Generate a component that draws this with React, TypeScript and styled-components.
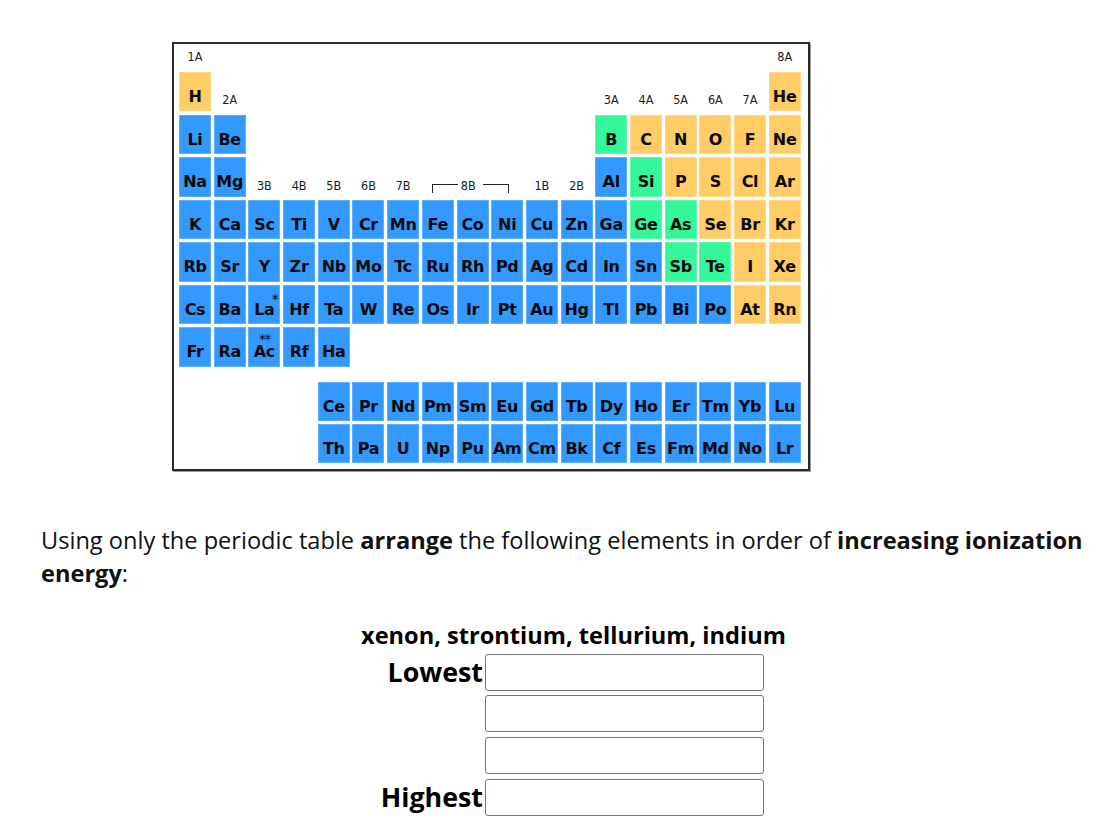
import React from "react";
import styled, { createGlobalStyle } from "styled-components";

const Global = createGlobalStyle`
  html, body { margin: 0; padding: 0; background: #fff; }
  body { font-family: "Open Sans", "Noto Sans", sans-serif; color: #000; }
`;

const YELLOW = new Set(["H","He","C","N","O","F","Ne","P","S","Cl","Ar","Se","Br","Kr","I","Xe","At","Rn"]);
const GREEN = new Set(["B","Si","Ge","As","Sb","Te"]);

type Kind = "metal" | "nonmetal" | "metalloid";
const kindOf = (s: string): Kind => (YELLOW.has(s) ? "nonmetal" : GREEN.has(s) ? "metalloid" : "metal");
const FILL: Record<Kind, string> = { metal: "#3399ff", nonmetal: "#ffcc66", metalloid: "#33f799" };

type El = { s: string; c: number; r: number; mark?: "one" | "two" };

const seq = (syms: string[], row: number, start: number): El[] => syms.map((s, i) => ({ s, c: start + i, r: row }));

const ELEMENTS: El[] = [
  { s: "H", c: 1, r: 2 }, { s: "He", c: 18, r: 2 },
  ...seq(["Li", "Be"], 3, 1), ...seq(["B", "C", "N", "O", "F", "Ne"], 3, 13),
  ...seq(["Na", "Mg"], 4, 1), ...seq(["Al", "Si", "P", "S", "Cl", "Ar"], 4, 13),
  ...seq(["K","Ca","Sc","Ti","V","Cr","Mn","Fe","Co","Ni","Cu","Zn","Ga","Ge","As","Se","Br","Kr"], 5, 1),
  ...seq(["Rb","Sr","Y","Zr","Nb","Mo","Tc","Ru","Rh","Pd","Ag","Cd","In","Sn","Sb","Te","I","Xe"], 6, 1),
  ...seq(["Cs","Ba","La","Hf","Ta","W","Re","Os","Ir","Pt","Au","Hg","Tl","Pb","Bi","Po","At","Rn"], 7, 1),
  ...seq(["Fr","Ra","Ac","Rf","Ha"], 8, 1),
  ...seq(["Ce","Pr","Nd","Pm","Sm","Eu","Gd","Tb","Dy","Ho","Er","Tm","Yb","Lu"], 10, 5),
  ...seq(["Th","Pa","U","Np","Pu","Am","Cm","Bk","Cf","Es","Fm","Md","No","Lr"], 11, 5),
].map((e) => (e.s === "La" ? { ...e, mark: "one" as const } : e.s === "Ac" ? { ...e, mark: "two" as const } : e));

const GROUPS: { t: string; c: number; r: number }[] = [
  { t: "1A", c: 1, r: 1 }, { t: "8A", c: 18, r: 1 },
  { t: "2A", c: 2, r: 2 },
  { t: "3A", c: 13, r: 2 }, { t: "4A", c: 14, r: 2 }, { t: "5A", c: 15, r: 2 }, { t: "6A", c: 16, r: 2 }, { t: "7A", c: 17, r: 2 },
  { t: "3B", c: 3, r: 4 }, { t: "4B", c: 4, r: 4 }, { t: "5B", c: 5, r: 4 }, { t: "6B", c: 6, r: 4 }, { t: "7B", c: 7, r: 4 },
  { t: "1B", c: 11, r: 4 }, { t: "2B", c: 12, r: 4 },
];

const Page = styled.div`
  padding-top: 42px;
  padding-bottom: 10px;
`;

const Frame = styled.div`
  box-sizing: border-box;
  width: 638px;
  height: 429px;
  margin-left: 172px;
  border: 2px solid #2b2b2b;
  box-shadow: 1px 1px 0 #9a9a9a;
  padding-left: 5px;
  background: #fff;
`;

const Table = styled.div`
  display: grid;
  grid-template-columns: repeat(18, 32px);
  grid-template-rows: 24.8px repeat(7, 39.4px) 8.3px repeat(2, 39.4px);
  column-gap: 2.7px;
  row-gap: 3.2px;
`;

const Cell = styled.div<{ $c: number; $r: number; $kind: Kind }>`
  grid-column: ${(p) => p.$c};
  grid-row: ${(p) => p.$r};
  position: relative;
  box-sizing: border-box;
  background: ${(p) => FILL[p.$kind]};
  box-shadow: inset 0 0 0 1px rgba(255, 255, 255, 0.22);
  padding-top: 17px;
  text-align: center;
  font-family: "DejaVu Sans", sans-serif;
  font-weight: bold;
  font-size: 16px;
  line-height: 16px;
  color: #0a0a0a;
  letter-spacing: -0.3px;
  white-space: nowrap;
`;

const Mark = styled.span<{ $double?: boolean }>`
  position: absolute;
  top: ${(p) => (p.$double ? "7px" : "9px")};
  left: ${(p) => (p.$double ? "16px" : "26px")};
  transform: translateX(-50%);
  font-family: "DejaVu Sans", sans-serif;
  font-weight: normal;
  font-size: 14px;
  line-height: 10px;
  letter-spacing: -1.5px;
`;

const GroupLabel = styled.div<{ $c: number; $r: number; $span?: number }>`
  grid-column: ${(p) => p.$c} / span ${(p) => p.$span ?? 1};
  grid-row: ${(p) => p.$r};
  display: flex;
  align-items: flex-end;
  justify-content: center;
  padding-bottom: ${(p) => (p.$r === 1 ? "6px" : "5px")};
  font-family: "DejaVu Sans Condensed", "DejaVu Sans", sans-serif;
  font-size: 12.5px;
  line-height: 12px;
  color: #1a1a1a;
`;

const BracketRow = styled(GroupLabel)`
  justify-content: flex-start;
  padding-left: 10px;
`;

const Bracket = styled.span<{ $side: "left" | "right" }>`
  width: 25px;
  height: 8px;
  margin-bottom: -1px;
  border-top: 1px solid #222;
  ${(p) => (p.$side === "left" ? "border-left: 1px solid #222; margin-right: 3px;" : "border-right: 1px solid #222; margin-left: 7px;")}
`;

const Content = styled.div`
  margin-left: 41px;
  width: 1063px;
`;

const Prompt = styled.p`
  margin: 53px 0 0;
  font-size: 23.6px;
  line-height: 32.5px;
  color: #111;
`;

const Answers = styled.div`
  display: grid;
  grid-template-columns: 124px 299px;
  width: 423px;
  margin: 29.5px auto 0;
  row-gap: 4.7px;
`;

const Elements = styled.div`
  grid-column: 1 / span 2;
  text-align: center;
  font-size: 23.6px;
  line-height: 32.5px;
  font-weight: bold;
  white-space: nowrap;
  margin-bottom: -2px;
`;

const RowLabel = styled.label`
  grid-column: 1;
  display: flex;
  align-items: center;
  justify-content: flex-end;
  padding-right: 2px;
  font-size: 26.8px;
  line-height: 36px;
  font-weight: bold;
  white-space: nowrap;
`;

const Field = styled.input`
  grid-column: 2;
  box-sizing: border-box;
  width: 279px;
  height: 37px;
  margin: 0;
  border: 1px solid #767676;
  border-radius: 3px;
  background: #fff;
`;

const SLOTS = ["Lowest", "", "", "Highest"];

export default function App() {
  return (
    <Page>
      <Global />
      <Frame>
        <Table>
          {GROUPS.map((g) => (
            <GroupLabel key={g.t} $c={g.c} $r={g.r}>{g.t}</GroupLabel>
          ))}
          <BracketRow $c={8} $r={4} $span={3}>
            <Bracket $side="left" />
            8B
            <Bracket $side="right" />
          </BracketRow>
          {ELEMENTS.map((e) => (
            <Cell key={e.s} $c={e.c} $r={e.r} $kind={kindOf(e.s)}>
              {e.s}
              {e.mark === "one" && <Mark>*</Mark>}
              {e.mark === "two" && <Mark $double>**</Mark>}
            </Cell>
          ))}
        </Table>
      </Frame>
      <Content>
        <Prompt>
          Using only the periodic table <b>arrange</b> the following elements in order of <b>increasing ionization energy</b>:
        </Prompt>
        <Answers>
          <Elements>xenon, strontium, tellurium, indium</Elements>
          {SLOTS.map((s, i) => (
            <React.Fragment key={i}>
              <RowLabel>{s}</RowLabel>
              <Field type="text" aria-label={s || `Rank ${i + 1}`} />
            </React.Fragment>
          ))}
        </Answers>
      </Content>
    </Page>
  );
}
